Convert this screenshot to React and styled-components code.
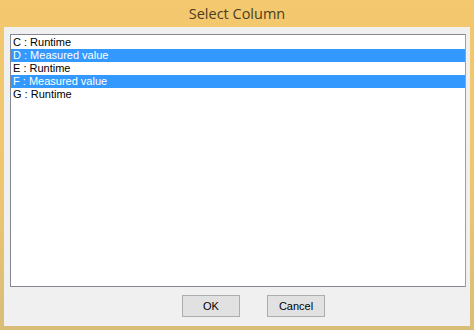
import React from "react";
import styled, { createGlobalStyle } from "styled-components";

const Global = createGlobalStyle`
  html, body { margin: 0; padding: 0; background: #f0f0f0; }
  #root { width: 474px; height: 330px; }
`;

const Window = styled.div`
  width: 474px;
  height: 330px;
  box-sizing: border-box;
  display: flex;
  flex-direction: column;
  padding: 0 4px 4px 4px;
  background: linear-gradient(to bottom, #f3c86e 0%, #efc670 55%, #d8bd78 100%);
`;

const TitleBar = styled.div`
  height: 27px;
  display: flex;
  align-items: center;
  justify-content: center;
  font-family: "Open Sans", "Noto Sans", sans-serif;
  font-size: 14.5px;
  color: #4b3d1f;
  padding-bottom: 1px;
  box-sizing: border-box;
`;

const Client = styled.div`
  flex: 1;
  background: #f0f0f0;
  display: flex;
  flex-direction: column;
  padding: 7px 4px 0 6px;
  box-sizing: border-box;
`;

const ListBox = styled.div`
  height: 253px;
  box-sizing: border-box;
  background: #ffffff;
  border: 1px solid #828790;
  border-right-color: #a0a0a0;
  padding: 1px 0 0 0;
  display: flex;
  flex-direction: column;
`;

const Item = styled.div`
  height: 13px;
  line-height: 13px;
  padding-left: 2px;
  font-family: "Liberation Sans", Arial, sans-serif;
  font-size: 11px;
  color: ${(p) => (p.$selected ? "#ffffff" : "#000000")};
  background: ${(p) => (p.$selected ? "#3399ff" : "transparent")};
  white-space: nowrap;
`;

const ButtonRow = styled.div`
  display: flex;
  gap: 27px;
  padding-left: 172px;
  margin-top: 8px;
`;

const Button = styled.button`
  width: 58px;
  height: 22px;
  box-sizing: border-box;
  background: #e1e1e1;
  border: 1px solid #adadad;
  border-radius: 0;
  font-family: "Liberation Sans", Arial, sans-serif;
  font-size: 11px;
  color: #000;
  padding: 0;
  margin: 0;
`;

const items = [
  { label: "C : Runtime", selected: false },
  { label: "D : Measured value", selected: true },
  { label: "E : Runtime", selected: false },
  { label: "F : Measured value", selected: true },
  { label: "G : Runtime", selected: false },
];

export default function App() {
  return (
    <>
      <Global />
      <Window>
        <TitleBar>Select Column</TitleBar>
        <Client>
          <ListBox>
            {items.map((it) => (
              <Item key={it.label} $selected={it.selected}>
                {it.label}
              </Item>
            ))}
          </ListBox>
          <ButtonRow>
            <Button>OK</Button>
            <Button>Cancel</Button>
          </ButtonRow>
        </Client>
      </Window>
    </>
  );
}
